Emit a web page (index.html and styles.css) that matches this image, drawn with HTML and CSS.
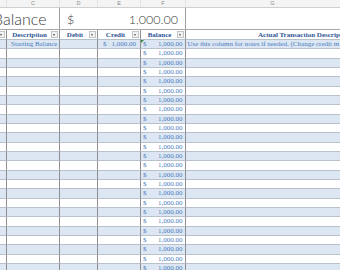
FILE: index.html
```html
<!DOCTYPE html>
<html>
<head>
<meta charset="utf-8">
<link rel="stylesheet" href="styles.css">
</head>
<body>
<div class="sheet">
  <div class="row colhdr">
    <div class="cell b"></div>
    <div class="cell c">C</div>
    <div class="cell d">D</div>
    <div class="cell e">E</div>
    <div class="cell f">F</div>
    <div class="cell g">G</div>
  </div>
  <div class="row title">
    <div class="cell bc label">Balance</div>
    <div class="cell def amount"><span>$</span><span>1,000.00</span></div>
    <div class="cell g"></div>
  </div>
  <div class="row thead">
    <div class="cell b"><span class="txt"></span><span class="dd"></span></div>
    <div class="cell c"><span class="txt">Description</span><span class="dd"></span></div>
    <div class="cell d"><span class="txt">Debit</span><span class="dd"></span></div>
    <div class="cell e"><span class="txt">Credit</span><span class="dd"></span></div>
    <div class="cell f"><span class="txt">Balance</span><span class="dd"></span></div>
    <div class="cell g"><span class="gtxt">Actual Transaction Description</span></div>
  </div>
  <div class="row data alt">
    <div class="cell b"></div>
    <div class="cell c">Starting Balance</div>
    <div class="cell d"></div>
    <div class="cell e money"><span>$</span><span>1,000.00</span></div>
    <div class="cell f money flag"><span>$</span><span>1,000.00</span></div>
    <div class="cell g">Use this column for notes if needed. (Change credit m</div>
  </div>
  <div class="row data"><div class="cell b"></div><div class="cell c"></div><div class="cell d"></div><div class="cell e"></div><div class="cell f money"><span>$</span><span>1,000.00</span></div><div class="cell g"></div></div>
  <div class="row data alt"><div class="cell b"></div><div class="cell c"></div><div class="cell d"></div><div class="cell e"></div><div class="cell f money"><span>$</span><span>1,000.00</span></div><div class="cell g"></div></div>
  <div class="row data"><div class="cell b"></div><div class="cell c"></div><div class="cell d"></div><div class="cell e"></div><div class="cell f money"><span>$</span><span>1,000.00</span></div><div class="cell g"></div></div>
  <div class="row data alt"><div class="cell b"></div><div class="cell c"></div><div class="cell d"></div><div class="cell e"></div><div class="cell f money"><span>$</span><span>1,000.00</span></div><div class="cell g"></div></div>
  <div class="row data"><div class="cell b"></div><div class="cell c"></div><div class="cell d"></div><div class="cell e"></div><div class="cell f money"><span>$</span><span>1,000.00</span></div><div class="cell g"></div></div>
  <div class="row data alt"><div class="cell b"></div><div class="cell c"></div><div class="cell d"></div><div class="cell e"></div><div class="cell f money"><span>$</span><span>1,000.00</span></div><div class="cell g"></div></div>
  <div class="row data"><div class="cell b"></div><div class="cell c"></div><div class="cell d"></div><div class="cell e"></div><div class="cell f money"><span>$</span><span>1,000.00</span></div><div class="cell g"></div></div>
  <div class="row data alt"><div class="cell b"></div><div class="cell c"></div><div class="cell d"></div><div class="cell e"></div><div class="cell f money"><span>$</span><span>1,000.00</span></div><div class="cell g"></div></div>
  <div class="row data"><div class="cell b"></div><div class="cell c"></div><div class="cell d"></div><div class="cell e"></div><div class="cell f money"><span>$</span><span>1,000.00</span></div><div class="cell g"></div></div>
  <div class="row data alt"><div class="cell b"></div><div class="cell c"></div><div class="cell d"></div><div class="cell e"></div><div class="cell f money"><span>$</span><span>1,000.00</span></div><div class="cell g"></div></div>
  <div class="row data"><div class="cell b"></div><div class="cell c"></div><div class="cell d"></div><div class="cell e"></div><div class="cell f money"><span>$</span><span>1,000.00</span></div><div class="cell g"></div></div>
  <div class="row data alt"><div class="cell b"></div><div class="cell c"></div><div class="cell d"></div><div class="cell e"></div><div class="cell f money"><span>$</span><span>1,000.00</span></div><div class="cell g"></div></div>
  <div class="row data"><div class="cell b"></div><div class="cell c"></div><div class="cell d"></div><div class="cell e"></div><div class="cell f money"><span>$</span><span>1,000.00</span></div><div class="cell g"></div></div>
  <div class="row data alt"><div class="cell b"></div><div class="cell c"></div><div class="cell d"></div><div class="cell e"></div><div class="cell f money"><span>$</span><span>1,000.00</span></div><div class="cell g"></div></div>
  <div class="row data"><div class="cell b"></div><div class="cell c"></div><div class="cell d"></div><div class="cell e"></div><div class="cell f money"><span>$</span><span>1,000.00</span></div><div class="cell g"></div></div>
  <div class="row data alt"><div class="cell b"></div><div class="cell c"></div><div class="cell d"></div><div class="cell e"></div><div class="cell f money"><span>$</span><span>1,000.00</span></div><div class="cell g"></div></div>
  <div class="row data"><div class="cell b"></div><div class="cell c"></div><div class="cell d"></div><div class="cell e"></div><div class="cell f money"><span>$</span><span>1,000.00</span></div><div class="cell g"></div></div>
  <div class="row data alt"><div class="cell b"></div><div class="cell c"></div><div class="cell d"></div><div class="cell e"></div><div class="cell f money"><span>$</span><span>1,000.00</span></div><div class="cell g"></div></div>
  <div class="row data"><div class="cell b"></div><div class="cell c"></div><div class="cell d"></div><div class="cell e"></div><div class="cell f money"><span>$</span><span>1,000.00</span></div><div class="cell g"></div></div>
  <div class="row data alt"><div class="cell b"></div><div class="cell c"></div><div class="cell d"></div><div class="cell e"></div><div class="cell f money"><span>$</span><span>1,000.00</span></div><div class="cell g"></div></div>
  <div class="row data"><div class="cell b"></div><div class="cell c"></div><div class="cell d"></div><div class="cell e"></div><div class="cell f money"><span>$</span><span>1,000.00</span></div><div class="cell g"></div></div>
  <div class="row data alt"><div class="cell b"></div><div class="cell c"></div><div class="cell d"></div><div class="cell e"></div><div class="cell f money"><span>$</span><span>1,000.00</span></div><div class="cell g"></div></div>
  <div class="row data"><div class="cell b"></div><div class="cell c"></div><div class="cell d"></div><div class="cell e"></div><div class="cell f money"><span>$</span><span>1,000.00</span></div><div class="cell g"></div></div>
  <div class="row data alt"><div class="cell b"></div><div class="cell c"></div><div class="cell d"></div><div class="cell e"></div><div class="cell f money"><span>$</span><span>1,000.00</span></div><div class="cell g"></div></div>
  <div class="row data"><div class="cell b"></div><div class="cell c"></div><div class="cell d"></div><div class="cell e"></div><div class="cell f money"><span>$</span><span>1,000.00</span></div><div class="cell g"></div></div>
</div>
</body>
</html>
```
FILE: styles.css
```css
html, body {
  margin: 0;
  padding: 0;
  background: #ffffff;
  overflow: hidden;
}
.sheet {
  display: flex;
  flex-direction: column;
  margin-left: -20px;
  width: 380px;
  font-family: "Liberation Serif", serif;
  font-size: 7px;
}
.row {
  display: flex;
  flex: none;
}
.cell {
  box-sizing: border-box;
  flex: none;
  overflow: hidden;
  white-space: nowrap;
}
.b { width: 27px; }
.c { width: 53px; }
.d { width: 38px; }
.e { width: 43px; }
.f { width: 45px; }
.g { width: 174px; }
.bc { width: 80px; }
.def { width: 126px; }

/* column letters */
.colhdr {
  height: 8px;
  background: #f4f4f4;
  border-bottom: 1px solid #cfcfcf;
  box-sizing: border-box;
}
.colhdr .cell {
  border-right: 1px solid #e2e2e2;
  font-family: "Liberation Sans", sans-serif;
  font-size: 5.5px;
  color: #8a8a8a;
  text-align: center;
  line-height: 7px;
}

/* title row */
.title {
  height: 22px;
  border-bottom: 1px solid #a9a9a9;
  box-sizing: border-box;
  font-family: Lato, "Open Sans", sans-serif;
  font-weight: 300;
  color: #3c3c3c;
}
.title .cell { border-right: 1px solid #a0a0a0; }
.title .g { border-right: none; }
.label {
  font-size: 16px;
  line-height: 16px;
  padding: 3px 0 0 13px;
}
.amount {
  display: flex;
  justify-content: space-between;
  font-size: 12.5px;
  line-height: 12px;
  padding: 6px 7px 0 7px;
}

/* header row */
.thead {
  height: 10px;
}
.thead .cell {
  display: flex;
  align-items: center;
  border-right: 1px solid #8f8f8f;
  border-bottom: 1px solid #b5bfca;
  font-weight: bold;
  color: #2f5597;
  line-height: 8px;
}
.thead .txt {
  flex: 1;
  text-align: center;
  padding-left: 1px;
}
.thead .dd {
  flex: none;
  width: 5px;
  height: 5px;
  margin-right: 1px;
  border: 1px solid #c4c4c4;
  background: #f2f2f2;
  position: relative;
}
.thead .dd::after {
  content: "";
  position: absolute;
  left: 1px;
  top: 2px;
  border-left: 1.5px solid transparent;
  border-right: 1.5px solid transparent;
  border-top: 2px solid #555555;
}
.thead .g { border-right: none; }
.gtxt {
  padding-left: 72px;
}

/* data rows */
.data {
  height: 9.33px;
}
.data .cell {
  display: flex;
  align-items: center;
  border-right: 1px solid #8f8f8f;
  border-bottom: 1px solid #b9c1cb;
  color: #4a7cc0;
  line-height: 8px;
}
.data .g { border-right: none; padding-left: 1.5px; }
.data .c { padding-left: 4px; }
.alt .cell { background: #dde7f3; }
.money {
  justify-content: space-between;
}
.data .e.money { padding: 0 4px 0 5px; }
.data .f.money { padding: 0 2.5px 0 2px; }
.flag { position: relative; }
.flag::before {
  content: "";
  position: absolute;
  left: 0;
  top: 0;
  border-top: 3px solid #2e8b3a;
  border-right: 3px solid transparent;
}
```
